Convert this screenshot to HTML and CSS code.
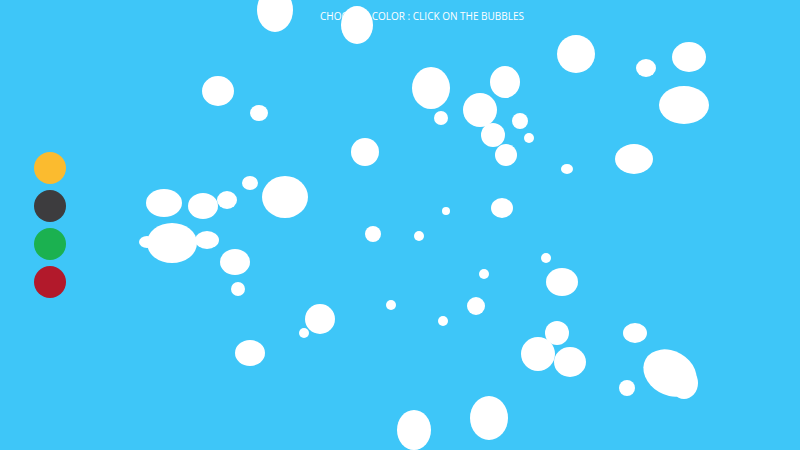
FILE: index.html
```html
<!DOCTYPE html>
<html>
<head>
<meta charset="utf-8">
<link rel="stylesheet" href="styles.css">
</head>
<body>
<div class="stage">
  <div class="title">CHOOSE A COLOR : CLICK ON THE BUBBLES</div>
  <div class="palette">
    <div class="swatch yellow"></div>
    <div class="swatch dark"></div>
    <div class="swatch green"></div>
    <div class="swatch red"></div>
  </div>
  <svg class="bubbles" width="800" height="450" viewBox="0 0 800 450">
    <g fill="#fff">
      <ellipse cx="275" cy="10" rx="18" ry="22"/>
      <ellipse cx="357" cy="25" rx="16" ry="19"/>
      <ellipse cx="218" cy="91" rx="16" ry="15"/>
      <ellipse cx="259" cy="113" rx="9" ry="8"/>
      <ellipse cx="431" cy="88" rx="19" ry="21"/>
      <ellipse cx="441" cy="118" rx="7" ry="7"/>
      <ellipse cx="505" cy="82" rx="15" ry="16"/>
      <ellipse cx="480" cy="110" rx="17" ry="17"/>
      <ellipse cx="493" cy="135" rx="12" ry="12"/>
      <ellipse cx="520" cy="121" rx="8" ry="8"/>
      <ellipse cx="529" cy="138" rx="5" ry="5"/>
      <ellipse cx="506" cy="155" rx="11" ry="11"/>
      <ellipse cx="576" cy="54" rx="19" ry="19"/>
      <ellipse cx="646" cy="68" rx="10" ry="9"/>
      <ellipse cx="689" cy="57" rx="17" ry="15"/>
      <ellipse cx="684" cy="105" rx="25" ry="19"/>
      <ellipse cx="634" cy="159" rx="19" ry="15"/>
      <ellipse cx="567" cy="169" rx="6" ry="5"/>
      <ellipse cx="365" cy="152" rx="14" ry="14"/>
      <ellipse cx="164" cy="203" rx="18" ry="14"/>
      <ellipse cx="203" cy="206" rx="15" ry="13"/>
      <ellipse cx="227" cy="200" rx="10" ry="9"/>
      <ellipse cx="250" cy="183" rx="8" ry="7"/>
      <ellipse cx="285" cy="197" rx="23" ry="21"/>
      <ellipse cx="172" cy="243" rx="25" ry="20"/>
      <ellipse cx="147" cy="242" rx="8" ry="6"/>
      <ellipse cx="207" cy="240" rx="12" ry="9"/>
      <ellipse cx="235" cy="262" rx="15" ry="13"/>
      <ellipse cx="238" cy="289" rx="7" ry="7"/>
      <ellipse cx="373" cy="234" rx="8" ry="8"/>
      <ellipse cx="446" cy="211" rx="4" ry="4"/>
      <ellipse cx="419" cy="236" rx="5" ry="5"/>
      <ellipse cx="502" cy="208" rx="11" ry="10"/>
      <ellipse cx="546" cy="258" rx="5" ry="5"/>
      <ellipse cx="484" cy="274" rx="5" ry="5"/>
      <ellipse cx="562" cy="282" rx="16" ry="14"/>
      <ellipse cx="391" cy="305" rx="5" ry="5"/>
      <ellipse cx="476" cy="306" rx="9" ry="9"/>
      <ellipse cx="443" cy="321" rx="5" ry="5"/>
      <ellipse cx="320" cy="319" rx="15" ry="15"/>
      <ellipse cx="304" cy="333" rx="5" ry="5"/>
      <ellipse cx="250" cy="353" rx="15" ry="13"/>
      <ellipse cx="557" cy="333" rx="12" ry="12"/>
      <ellipse cx="538" cy="354" rx="17" ry="17"/>
      <ellipse cx="570" cy="362" rx="16" ry="15"/>
      <ellipse cx="635" cy="333" rx="12" ry="10"/>
      <ellipse cx="627" cy="388" rx="8" ry="8"/>
      <ellipse cx="670" cy="373" rx="28" ry="22" transform="rotate(30 670 373)"/>
      <ellipse cx="684" cy="383" rx="14" ry="16"/>
      <ellipse cx="489" cy="418" rx="19" ry="22"/>
      <ellipse cx="414" cy="430" rx="17" ry="20"/>
    </g>
  </svg>
</div>
</body>
</html>
```

FILE: styles.css
```css
html, body {
  margin: 0;
  padding: 0;
}
body {
  width: 800px;
  height: 450px;
  overflow: hidden;
  background: #3ec6f8;
}
.stage {
  position: relative;
  width: 800px;
  height: 450px;
  background: #3ec6f8;
  font-family: "Open Sans", "Liberation Sans", sans-serif;
}
.title {
  padding: 9px 0 0 44px;
  text-align: center;
  color: #ffffff;
  font-size: 10px;
  line-height: 14px;
  letter-spacing: 0;
}
.palette {
  display: flex;
  flex-direction: column;
  gap: 6px;
  padding: 129px 0 0 34px;
}
.swatch {
  width: 32px;
  height: 32px;
  border-radius: 50%;
}
.yellow { background: #fbbb2f; }
.dark { background: #3d3c3e; }
.green { background: #1bb150; }
.red { background: #b2192b; }
.bubbles {
  position: absolute;
  left: 0;
  top: 0;
}
```
